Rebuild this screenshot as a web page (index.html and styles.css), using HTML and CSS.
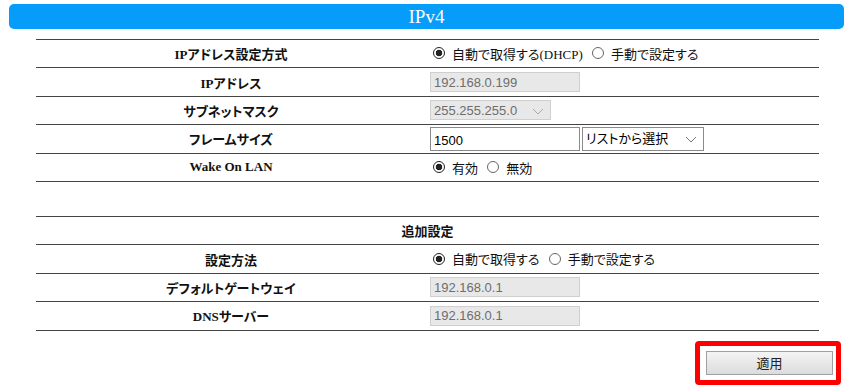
FILE: index.html
```html
<!DOCTYPE html>
<html lang="ja">
<head>
  <meta charset="UTF-8">
  <meta name="viewport" content="width=device-width, initial-scale=1.0">
  <title>IPv4</title>
  <link rel="stylesheet" href="styles.css">
</head>
<body>
  <div class="title">IPv4</div>

  <table class="settings">
    <tr>
      <td class="label">IPアドレス設定方式</td>
      <td class="value">
        <label class="opt"><input type="radio" name="ipmode" checked>自動で取得する(DHCP)</label>
        <label class="opt"><input type="radio" name="ipmode">手動で設定する</label>
      </td>
    </tr>
    <tr>
      <td class="label">IPアドレス</td>
      <td class="value"><input type="text" class="field" value="192.168.0.199" disabled></td>
    </tr>
    <tr>
      <td class="label">サブネットマスク</td>
      <td class="value">
        <span class="select">
          <select class="mask"><option>255.255.255.0</option></select>
          <svg class="chev" width="12" height="7" viewBox="0 0 12 7"><path d="M1 1 L6 6 L11 1" fill="none" stroke="#a8a8a8" stroke-width="1"/></svg>
        </span>
      </td>
    </tr>
    <tr class="tall">
      <td class="label">フレームサイズ</td>
      <td class="value">
        <input type="text" class="field edit" value="1500"><span class="select">
          <select class="list"><option>リストから選択</option></select>
          <svg class="chev" width="12" height="7" viewBox="0 0 12 7"><path d="M1 1 L6 6 L11 1" fill="none" stroke="#777" stroke-width="1"/></svg>
        </span>
      </td>
    </tr>
    <tr>
      <td class="label">Wake On LAN</td>
      <td class="value">
        <label class="opt"><input type="radio" name="wol" checked>有効</label>
        <label class="opt"><input type="radio" name="wol">無効</label>
      </td>
    </tr>
    <tr class="blank">
      <td colspan="2"></td>
    </tr>
    <tr>
      <td class="section" colspan="2">追加設定</td>
    </tr>
    <tr>
      <td class="label">設定方法</td>
      <td class="value">
        <label class="opt"><input type="radio" name="extra" checked>自動で取得する</label>
        <label class="opt"><input type="radio" name="extra">手動で設定する</label>
      </td>
    </tr>
    <tr>
      <td class="label">デフォルトゲートウェイ</td>
      <td class="value"><input type="text" class="field" value="192.168.0.1" disabled></td>
    </tr>
    <tr>
      <td class="label">DNSサーバー</td>
      <td class="value"><input type="text" class="field" value="192.168.0.1" disabled></td>
    </tr>
  </table>

  <div class="actions">
    <div class="frame">
      <button class="apply">適用</button>
    </div>
  </div>
</body>
</html>
```

FILE: styles.css
```css
* {
  box-sizing: border-box;
}

body {
  margin: 0;
  font-family: "Liberation Serif", "Noto Sans CJK JP", serif;
  font-size: 13px;
  font-feature-settings: "palt";
  color: #111;
  background: #fff;
}

input, select, button {
  appearance: none;
  outline: none;
  margin: 0;
  font-family: "Liberation Sans", "Noto Sans CJK JP", sans-serif;
  font-size: 13px;
  font-feature-settings: "palt";
}

.title {
  margin: 4px 6px 0 9px;
  height: 25px;
  line-height: 25px;
  background-color: #069cfa;
  border-radius: 5px;
  color: #fff;
  text-align: center;
  font-size: 19px;
}

.settings {
  margin: 10px 0 0 36px;
  width: 783px;
  border-collapse: collapse;
}

.settings td {
  height: 28.4px;
  padding: 0;
  border-top: 1px solid #444;
  border-bottom: 1px solid #444;
  vertical-align: middle;
}

.settings .label {
  width: 390px;
  text-align: center;
  font-weight: bold;
}

.settings .value {
  padding-left: 4px;
}

.settings .section {
  text-align: center;
  font-weight: bold;
}

.settings tr.blank td {
  height: 35px;
}

.settings tr.tall td.value {
  vertical-align: bottom;
  padding-bottom: 2px;
}

.opt {
  display: inline-flex;
  align-items: center;
  margin-right: 3px;
}

.opt input {
  width: 12px;
  height: 12px;
  margin: 0 7px 0 3px;
  border: 1px solid #666;
  border-radius: 50%;
  background: #fff;
}

.opt input:checked {
  border-color: #222;
  background: radial-gradient(circle, #222 0 3px, #fff 3.6px);
}

.field {
  width: 150px;
  height: 20px;
  padding: 0 3px;
  border: 1px solid #cfcfcf;
  background: #e8e8e8;
  color: #6d6d6d;
  vertical-align: middle;
}

.field.edit {
  height: 24px;
  border-color: #8a8a8a;
  background: #fff;
  color: #000;
  padding-top: 4px;
  vertical-align: bottom;
}

.select {
  position: relative;
  display: inline-block;
  vertical-align: middle;
}

.select select {
  display: block;
  padding: 0 3px;
  border-radius: 0;
}

.select .chev {
  position: absolute;
  right: 7px;
  top: 8px;
}

.mask {
  width: 121px;
  height: 20px;
  border: 1px solid #cfcfcf;
  background: #e8e8e8;
  color: #6d6d6d;
}

.tall .select {
  margin-left: 2px;
  vertical-align: bottom;
}

.tall .select .chev {
  top: 9px;
}

.list {
  width: 122px;
  height: 24px;
  border: 1px solid #8a8a8a;
  background: #fff;
  color: #000;
  padding-bottom: 4px;
}

.actions {
  display: flex;
  justify-content: flex-end;
  margin: 10px 9px 0 0;
}

.frame {
  border: 5px solid #ff0000;
  border-radius: 4px;
  padding: 5px 3px 5px 6px;
}

.apply {
  display: block;
  width: 127px;
  height: 24px;
  border: 1px solid #a0a0a0;
  background: linear-gradient(#f4f4f4, #dcdcdc);
  color: #222;
}
```
